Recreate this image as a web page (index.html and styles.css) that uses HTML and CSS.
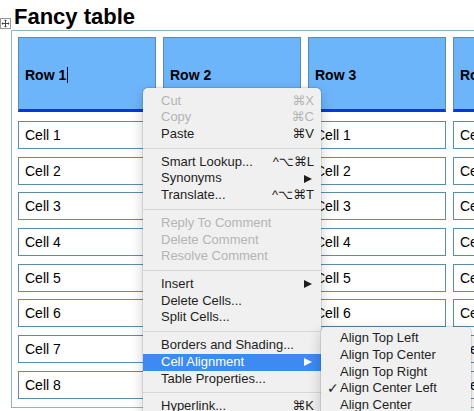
FILE: index.html
```html
<!DOCTYPE html>
<html>
<head>
<meta charset="utf-8">
<link rel="stylesheet" href="styles.css">
</head>
<body>
<div class="page">
  <h1 class="title">Fancy table</h1>
  <div class="table">
    <span class="handle"><svg width="11" height="11" viewBox="0 0 11 11"><rect x="0.5" y="0.5" width="10" height="10" fill="#fff" stroke="#9a9a9a"/><path d="M5.5 2v7M2 5.5h7" stroke="#444" stroke-width="1"/><path d="M5.5 1.5l-1.5 1.5h3zM5.5 9.5l-1.5-1.5h3zM1.5 5.5l1.5-1.5v3zM9.5 5.5l-1.5-1.5v3z" fill="#444"/></svg></span>
    <div class="head">
      <div class="hcell">Row 1<span class="caret"></span></div>
      <div class="hcell">Row 2</div>
      <div class="hcell">Row 3</div>
      <div class="hcell">Row 4</div>
    </div>
    <div class="body">
      <div class="cell">Cell 1</div><div class="cell">Cell 1</div><div class="cell">Cell 1</div><div class="cell">Cell 1</div>
      <div class="cell">Cell 2</div><div class="cell">Cell 2</div><div class="cell">Cell 2</div><div class="cell">Cell 2</div>
      <div class="cell">Cell 3</div><div class="cell">Cell 3</div><div class="cell">Cell 3</div><div class="cell">Cell 3</div>
      <div class="cell">Cell 4</div><div class="cell">Cell 4</div><div class="cell">Cell 4</div><div class="cell">Cell 4</div>
      <div class="cell">Cell 5</div><div class="cell">Cell 5</div><div class="cell">Cell 5</div><div class="cell">Cell 5</div>
      <div class="cell">Cell 6</div><div class="cell">Cell 6</div><div class="cell">Cell 6</div><div class="cell">Cell 6</div>
      <div class="cell">Cell 7</div><div class="cell">Cell 7</div><div class="cell">Cell 7</div><div class="cell">Cell 7</div>
      <div class="cell">Cell 8</div><div class="cell">Cell 8</div><div class="cell">Cell 8</div><div class="cell">Cell 8</div>
    </div>
  </div>

  <div class="menu">
    <div class="mi dis"><span>Cut</span><span class="sc">⌘X</span></div>
    <div class="mi dis"><span>Copy</span><span class="sc">⌘C</span></div>
    <div class="mi"><span>Paste</span><span class="sc">⌘V</span></div>
    <div class="sep"></div>
    <div class="mi"><span>Smart Lookup...</span><span class="sc">^⌥⌘L</span></div>
    <div class="mi"><span>Synonyms</span><span class="arrow"></span></div>
    <div class="mi"><span>Translate...</span><span class="sc">^⌥⌘T</span></div>
    <div class="sep"></div>
    <div class="mi dis"><span>Reply To Comment</span></div>
    <div class="mi dis"><span>Delete Comment</span></div>
    <div class="mi dis"><span>Resolve Comment</span></div>
    <div class="sep"></div>
    <div class="mi"><span>Insert</span><span class="arrow"></span></div>
    <div class="mi"><span>Delete Cells...</span></div>
    <div class="mi"><span>Split Cells...</span></div>
    <div class="sep"></div>
    <div class="mi"><span>Borders and Shading...</span></div>
    <div class="mi hl"><span>Cell Alignment</span><span class="arrow"></span></div>
    <div class="mi"><span>Table Properties...</span></div>
    <div class="sep"></div>
    <div class="mi"><span>Hyperlink...</span><span class="sc">⌘K</span></div>
  </div>

  <div class="submenu">
    <div class="si"><span class="check"></span><span>Align Top Left</span></div>
    <div class="si"><span class="check"></span><span>Align Top Center</span></div>
    <div class="si"><span class="check"></span><span>Align Top Right</span></div>
    <div class="si"><span class="check">✓</span><span>Align Center Left</span></div>
    <div class="si"><span class="check"></span><span>Align Center</span></div>
    <div class="si"><span class="check"></span><span>Align Center Right</span></div>
  </div>
</div>
</body>
</html>
```

FILE: styles.css
```css
html, body {
  margin: 0;
  padding: 0;
  height: 411px;
  overflow: hidden;
  background: #fff;
}

.page {
  position: relative;
  height: 411px;
  font-family: "Liberation Sans", Arial, sans-serif;
  color: #000;
}

.title {
  margin: 0 0 0 14px;
  padding-top: 3px;
  font-size: 22px;
  line-height: 27px;
  font-weight: bold;
}

.table {
  position: relative;
  margin-left: 11px;
  border: 1px solid #8fb2c8;
  padding: 6px 6px 8px 6px;
  width: max-content;
}

.handle {
  position: absolute;
  left: -12px;
  top: -13px;
  width: 11px;
  height: 11px;
  display: block;
}

.handle svg {
  display: block;
}

.head {
  display: flex;
  gap: 7px;
}

.hcell {
  width: 138px;
  height: 75px;
  box-sizing: border-box;
  background: #6db5fb;
  border: 1px solid #5a8cae;
  border-bottom: 3px solid #0a35e2;
  display: flex;
  align-items: center;
  padding: 2px 0 0 6px;
  font-weight: bold;
  font-size: 14px;
}

.caret {
  display: inline-block;
  width: 1px;
  height: 16px;
  background: #000;
  margin-left: 1px;
}

.body {
  display: grid;
  grid-template-columns: repeat(4, 138px);
  column-gap: 7px;
  row-gap: 7.7px;
  margin-top: 9px;
}

.cell {
  height: 28px;
  box-sizing: border-box;
  border: 1px solid #5a8cae;
  display: flex;
  align-items: center;
  padding-left: 6px;
  font-size: 14px;
  background: #fff;
}

.menu {
  position: absolute;
  left: 143px;
  top: 88px;
  width: 178px;
  box-sizing: border-box;
  background: #f0f0f0;
  border-radius: 5px;
  box-shadow: 0 0 0 1px rgba(0,0,0,0.09), 0 4px 14px rgba(0,0,0,0.2);
  padding: 4.6px 0;
  font-size: 13px;
}

.mi {
  height: 16.8px;
  line-height: 16.8px;
  padding: 0 7px 0 18px;
  display: flex;
  justify-content: space-between;
  align-items: center;
  color: #1e1e1e;
  white-space: nowrap;
}

.mi.dis {
  color: #b4b4b4;
}

.mi.hl {
  background: #3d8af0;
  color: #fff;
}

.sc {
  font-family: "Liberation Sans", "DejaVu Sans", sans-serif;
}

.arrow {
  width: 0;
  height: 0;
  border-left: 8px solid #1e1e1e;
  border-top: 4px solid transparent;
  border-bottom: 4px solid transparent;
  margin-right: 2px;
}

.mi.hl .arrow {
  border-left-color: #fff;
}

.sep {
  height: 10.7px;
  display: flex;
  align-items: center;
}

.sep::before {
  content: "";
  flex: 1;
  height: 1px;
  background: #d8d8d8;
}

.submenu {
  position: absolute;
  left: 321px;
  top: 327px;
  width: 150px;
  box-sizing: border-box;
  background: #f0f0f0;
  border-radius: 5px;
  box-shadow: 0 0 0 1px rgba(0,0,0,0.09), 0 4px 14px rgba(0,0,0,0.2);
  padding: 3.4px 0;
  font-size: 13px;
}

.si {
  height: 16.7px;
  line-height: 16.7px;
  padding-left: 6px;
  display: flex;
  align-items: center;
  color: #1e1e1e;
  white-space: nowrap;
}

.check {
  width: 13px;
  font-family: "DejaVu Sans", sans-serif;
  font-size: 14px;
  font-weight: bold;
}
```
